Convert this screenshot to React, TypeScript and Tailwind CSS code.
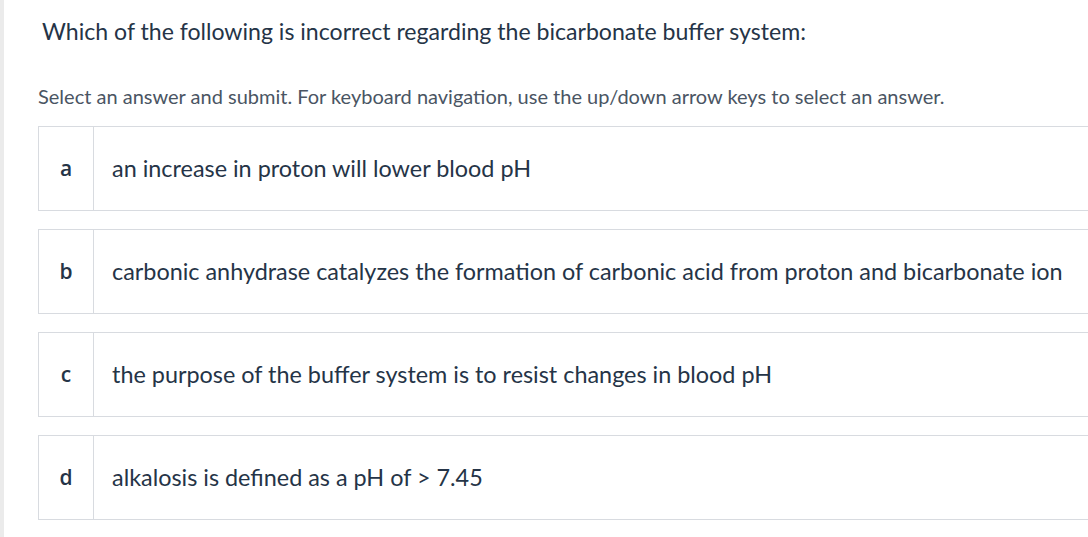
import React from "react";

const options = [
  { k: "a", t: "an increase in proton will lower blood pH" },
  { k: "b", t: "carbonic anhydrase catalyzes the formation of carbonic acid from proton and bicarbonate ion" },
  { k: "c", t: "the purpose of the buffer system is to resist changes in blood pH" },
  { k: "d", t: "alkalosis is defined as a pH of > 7.45" },
];

export default function App() {
  return (
    <div className="w-[1088px] h-[537px] overflow-hidden bg-white flex" style={{ fontFamily: "Lato, 'Open Sans', sans-serif" }}>
      <div className="w-[4px] h-full bg-[#ebebeb] shrink-0" />
      <div className="flex-1 pl-[34px] pt-[14px] min-w-0">
        <h1 className="pl-[4px] text-[23.1px] leading-[34px] text-[#253447] font-normal">
          Which of the following is incorrect regarding the bicarbonate buffer system:
        </h1>
        <p className="mt-[35px] text-[20px] leading-[26px] text-[#4a5563]">
          Select an answer and submit. For keyboard navigation, use the up/down arrow keys to select an answer.
        </p>
        <div className="mt-[17px] flex flex-col gap-[18px]">
          {options.map((o) => (
            <div key={o.k} className="flex h-[85px] border border-[#d8dbe0] border-r-0 w-[1060px]">
              <div
                className="w-[55px] shrink-0 border-r border-[#d8dbe0] flex items-center justify-center text-[21px] font-semibold text-[#253447]"
                style={{ fontFamily: "'Open Sans', 'Noto Sans', sans-serif" }}
              >
                {o.k}
              </div>
              <div className="flex items-center pl-[18px] text-[23.4px] text-[#253447] whitespace-nowrap">
                {o.t}
              </div>
            </div>
          ))}
        </div>
      </div>
    </div>
  );
}
